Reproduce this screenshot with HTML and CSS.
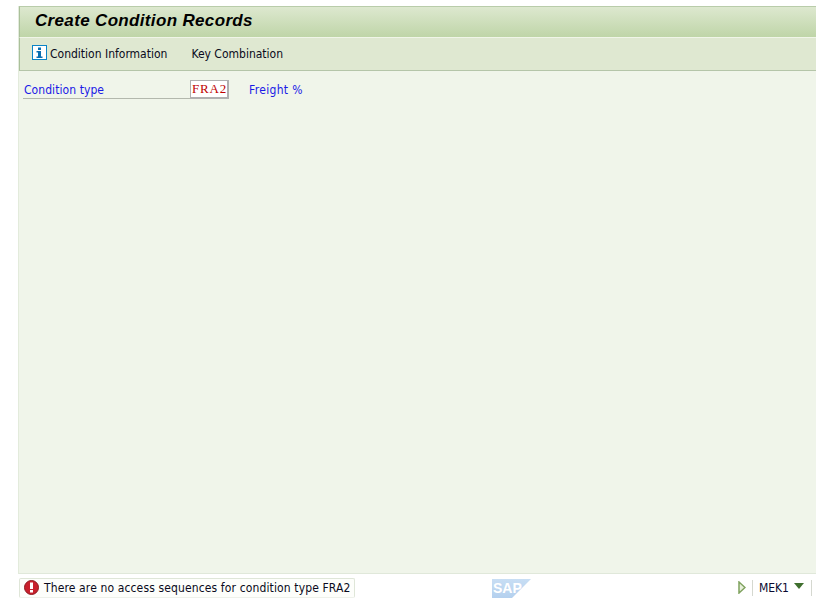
FILE: index.html
```html
<!DOCTYPE html>
<html lang="en">
<head>
<meta charset="utf-8">
<title>Create Condition Records</title>
<link rel="stylesheet" href="styles.css">
</head>
<body>
<div class="app">
  <main class="window">
    <header class="titlebar"><h1 class="title">Create Condition Records</h1></header>
    <nav class="toolbar">
      <button class="tool tool-info">
        <svg class="info-icon" width="15" height="15" viewBox="0 0 15 15"><rect x="0.500" y="0.500" width="14" height="14" fill="#fff" stroke="#0a84c6"/><rect x="6" y="2.500" width="3" height="2.500" fill="#0a6fb0"/><path d="M4.500 6h4.500v5.500h1.500v1.500h-6v-1.500h1.500v-4h-1.500z" fill="#0a6fb0"/></svg>
        <span>Condition Information</span>
      </button>
      <button class="tool">Key Combination</button>
    </nav>
    <section class="content">
      <div class="field-row">
        <label class="field-label">Condition type</label>
        <span class="field-input">FRA2</span>
        <span class="field-desc">Freight %</span>
      </div>
    </section>
  </main>
  <footer class="status">
    <div class="message">
      <svg class="err-icon" width="15" height="15" viewBox="0 0 15 15"><circle cx="7.500" cy="7.500" r="7" fill="#c8202c" stroke="#8d1a20"/><rect x="6" y="2.500" width="3" height="6.500" fill="#fff"/><rect x="6" y="10" width="3" height="2.500" fill="#fff"/></svg>
      <span>There are no access sequences for condition type FRA2</span>
    </div>
    <svg class="sap-logo" width="40" height="19" viewBox="0 0 40 19"><defs><linearGradient id="sapg" x1="0" y1="0" x2="0" y2="1"><stop offset="0" stop-color="#c8def4"/><stop offset="1" stop-color="#b4d0ee"/></linearGradient></defs><path d="M0 0H39L20 19H0z" fill="url(#sapg)"/><text x="1" y="14" class="sap-text">SAP</text></svg>
    <div class="sys">
      <svg class="play" width="8" height="13" viewBox="0 0 8 13"><path d="M1 1L7 6.500L1 12z" fill="#e8f0dc" stroke="#7fa25e" stroke-width="1.500"/></svg>
      <span class="sep"></span>
      <span class="sys-name">MEK1</span>
      <svg class="tri" width="10" height="6" viewBox="0 0 10 6"><path d="M0 0H10L5 6z" fill="#3f6f2e"/></svg>
      <span class="sep sep-end"></span>
    </div>
  </footer>
</div>
</body>
</html>
```
FILE: styles.css
```css
* { box-sizing: border-box; }
html, body { margin: 0; height: 100%; overflow: hidden; background: #fff; }
.app { width: 816px; height: 601px; display: flex; flex-direction: column; padding-top: 6px; font-family: "DejaVu Sans Condensed", "Noto Sans", sans-serif; font-size: 12px; color: #000; }
.window { flex: 1; margin-left: 18px; display: flex; flex-direction: column; background: #f0f5ea; border-left: 1px solid #e3ebdc; border-bottom: 1px solid #e0e8da; }
.titlebar { height: 31px; display: flex; align-items: center; padding: 0 0 2px 15px; background: linear-gradient(#dde8cf, #bfd5a8); border-top: 1px solid #b9ccaa; border-left: 1px solid #aac09a; }
.title { margin: 0; font: italic bold 17px "Liberation Sans", sans-serif; letter-spacing: 0.34px; color: #000; }
.toolbar { height: 34px; display: flex; align-items: center; gap: 24px; padding-left: 12px; background: #dfe8d1; border-top: 1px solid #f0f5e8; border-bottom: 1px solid #b5c5a9; border-left: 1px solid #aac09a; }
.tool { display: flex; align-items: center; gap: 3px; padding: 0; border: 0; background: none; font: inherit; color: #0a0a20; }
.info-icon { margin-top: -3px; }
.content { flex: 1; padding: 9px 0 0 4px; }
.field-row { display: flex; align-items: stretch; height: 19px; }
.field-label { width: 167px; padding: 3px 0 0 1px; letter-spacing: 0.07px; color: #1a1ae6; border-bottom: 1px solid #b3b8ad; }
.field-input { width: 39px; height: 19px; padding-left: 1px; font: 13px/16px "Liberation Serif", serif; letter-spacing: 0.8px; color: #c00000; background: #fff; border: 1px solid #b0b0b0; border-width: 1px 2px 2px 1px; }
.field-desc { margin-left: 20px; padding-top: 3px; letter-spacing: 0.33px; color: #1a1ae6; }
.status { height: 27px; display: flex; align-items: center; position: relative; padding-left: 19px; }
.message { width: 336px; height: 20px; display: flex; align-items: center; gap: 5px; padding-left: 4px; letter-spacing: 0.13px; border: 1px solid #dfe6d8; border-bottom-color: #eef1ea; border-radius: 2px; background: #fdfefb; color: #0a0a20; }
.sap-logo { position: absolute; left: 492px; top: 5px; }
.sap-text { font: bold 14px "Liberation Sans", sans-serif; fill: #fff; }
.sys { margin-left: auto; display: flex; align-items: center; height: 20px; }
.play { margin-right: 6px; }
.sep { width: 1px; height: 16px; background: #d5d8d0; }
.sys-name { margin-left: 6px; margin-right: 5px; color: #0a0a30; }
.tri { margin-right: 7px; margin-top: -4px; }
.sep-end { margin-right: 4px; }
```
